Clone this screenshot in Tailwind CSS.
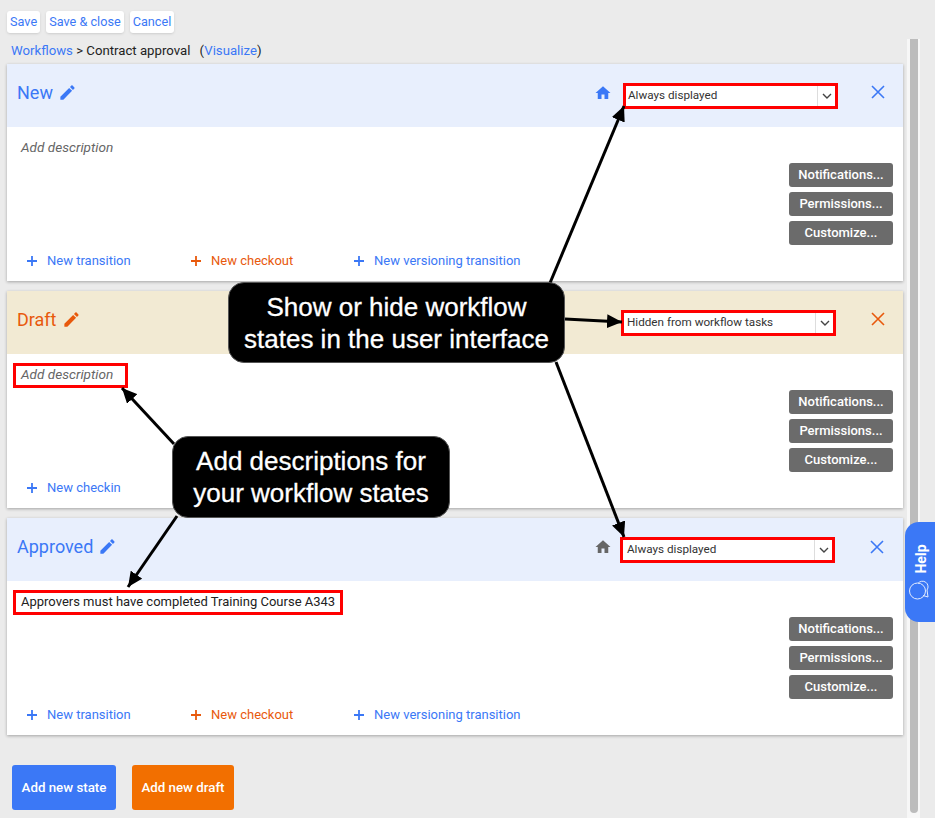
<!DOCTYPE html>
<html lang="en">
<head>
  <meta charset="UTF-8" />
  <meta name="viewport" content="width=device-width, initial-scale=1.0" />
  <title>Contract approval</title>
  <script src="https://cdn.jsdelivr.net/npm/@tailwindcss/browser@4"></script>
</head>
<body class="bg-[#ebebeb] h-[818px] overflow-hidden relative font-['Roboto',sans-serif] text-[13px] text-[#222]">
  <!-- Toolbar -->
  <div class="flex gap-[6px] pt-[11px] pl-[7px]">
    <button class="h-[22px] px-[3px] bg-white rounded-[3px] shadow-sm text-[12.7px] text-[#3b78f6]">Save</button>
    <button class="h-[22px] px-[3px] bg-white rounded-[3px] shadow-sm text-[12.7px] text-[#3b78f6]">Save &amp; close</button>
    <button class="h-[22px] px-[3px] bg-white rounded-[3px] shadow-sm text-[12.7px] text-[#3b78f6]">Cancel</button>
  </div>
  <div class="h-[31px] pl-[11px] pt-[10px] leading-[16px] text-[13.2px]">
    <a class="text-[#3b78f6]">Workflows</a> &gt; Contract approval <span class="ml-[6px]">(<a class="text-[#3b78f6]">Visualize</a>)</span>
  </div>

  <main id="states" class="ml-[7px] w-[896px] flex flex-col gap-[10px]"></main>

  <div class="flex gap-[16px] ml-[12px] mt-[30px]">
    <button class="w-[104px] h-[45px] bg-[#3b78f6] text-white text-[13.3px] font-medium rounded-[3px]">Add new state</button>
    <button class="w-[102px] h-[45px] bg-[#f26f00] text-white text-[13.3px] font-medium rounded-[3px]">Add new draft</button>
  </div>

  <!-- Scrollbar -->
  <div class="absolute left-[907px] top-[39px] bottom-0 w-[13px] bg-[#f7f7f7]">
    <div class="ml-[3px] w-[8px] h-[774px] bg-[#bcbcbc] rounded-b-[4px]"></div>
  </div>

  <!-- Help tab -->
  <div class="absolute left-[905px] top-[522px] w-[30px] h-[100px] bg-[#3b78f6] rounded-l-[14px]">
    <span class="absolute left-[1px] top-[28px] w-[30px] text-center -rotate-90 text-white font-bold text-[14px] leading-[18px]">Help</span>
    <svg class="absolute left-[3px] top-[56px]" width="24" height="24" viewBox="0 0 24 24" fill="none" stroke="#e3ecfe" stroke-width="1">
      <circle cx="9.5" cy="13" r="8" />
      <path d="M10 5.5a5.5 5.5 0 1 1 9 6.5l1 7-5-1.5" />
    </svg>
  </div>

  <!-- Annotations -->
  <svg class="absolute left-0 top-0 pointer-events-none" width="935" height="818">
    <defs>
      <marker id="head" markerUnits="userSpaceOnUse" markerWidth="16" markerHeight="14" refX="15" refY="7" orient="auto">
        <path d="M0 0L15 7L0 14z" fill="#000" />
      </marker>
    </defs>
    <g stroke="#000" stroke-width="3">
      <line x1="550" y1="283" x2="624" y2="106" marker-end="url(#head)" />
      <line x1="565" y1="319" x2="622" y2="322" marker-end="url(#head)" />
      <line x1="556" y1="362" x2="624" y2="537" marker-end="url(#head)" />
      <line x1="174" y1="444" x2="122" y2="388" marker-end="url(#head)" />
      <line x1="177" y1="516" x2="128" y2="587" marker-end="url(#head)" />
    </g>
  </svg>
  <div class="absolute left-[228px] top-[282px] w-[337px] h-[81px] flex items-center justify-center text-center bg-black border border-[#555] rounded-[16px] text-white font-['Liberation_Sans',sans-serif] text-[26px] leading-[32px] [-webkit-text-stroke:0.3px_#fff]">Show or hide workflow<br />states in the user interface</div>
  <div class="absolute left-[172px] top-[436px] w-[278px] h-[82px] flex items-center justify-center text-center bg-black border border-[#555] rounded-[16px] text-white font-['Liberation_Sans',sans-serif] text-[26px] leading-[32px] [-webkit-text-stroke:0.3px_#fff]">Add descriptions for<br />your workflow states</div>

  <script>
    const pencil = "M3 17.25V21h3.75L17.81 9.94l-3.75-3.75L3 17.25zM20.71 7.04c.39-.39.39-1.02 0-1.41l-2.34-2.34c-.39-.39-1.02-.39-1.41 0l-1.83 1.83 3.75 3.75 1.83-1.83z";
    const home = "M10 20v-6h4v6h5v-8h3L12 3 2 12h3v8z";

    const plus = `<svg class="w-[12px] h-[12px]" viewBox="0 0 12 12" fill="none" stroke="currentColor" stroke-width="1.8"><path d="M6 1v10M1 6h10" /></svg>`;
    const links = {
      full: `
        <a class="absolute left-[19px] flex items-center gap-[9px] text-[#3b78f6]">${plus}New transition</a>
        <a class="absolute left-[183px] flex items-center gap-[9px] text-[#e8590c]">${plus}New checkout</a>
        <a class="absolute left-[346px] flex items-center gap-[9px] text-[#3b78f6]">${plus}New versioning transition</a>`,
      draft: `<a class="absolute left-[19px] flex items-center gap-[9px] text-[#3b78f6]">${plus}New checkin</a>`
    };

    const states = [
      { name: "New", head: "bg-[#e8effd]", text: "text-[#3b78f6]", homeCls: "mr-[11px] text-[#3b78f6]", select: "Always displayed", selectCls: "mr-[65px]", selectPad: "pl-[2px]", xCls: "right-[18px] top-[21px]",
        desc: "Add description", descCls: "w-[115px] border-transparent italic text-[13.6px] text-[#666]", links: links.full },
      { name: "Draft", head: "bg-[#f2ead3]", text: "text-[#e8590c]", homeCls: "mr-[10px] invisible", select: "Hidden from workflow tasks", selectCls: "mr-[67px]", selectPad: "pl-[3px]", xCls: "right-[18px] top-[21px]",
        desc: "Add description", descCls: "w-[115px] border-[#f00] italic text-[13.6px] text-[#666]", links: links.draft },
      { name: "Approved", head: "bg-[#e8effd]", text: "text-[#3b78f6]", homeCls: "mr-[8px] text-[#666]", select: "Always displayed", selectCls: "mr-[68px]", selectPad: "pl-[4px]", xCls: "right-[19px] top-[22px]",
        desc: "Approvers must have completed Training Course A343", descCls: "w-[330px] border-[#f00] text-[#222]", links: links.full }
    ];

    document.getElementById("states").innerHTML = states.map(s => `
      <section class="h-[217px] bg-white shadow-[0_1px_3px_rgba(0,0,0,0.3)]">
        <header class="relative h-[63px] flex items-center pl-[10px] ${s.head}">
          <h2 class="-mt-[7px] text-[18px] ${s.text}">${s.name}</h2>
          <svg class="-mt-[7px] ml-[5px] ${s.text}" width="19" height="19" viewBox="0 0 24 24" fill="currentColor"><path d="${pencil}" /></svg>
          <svg class="-mt-[6px] ml-auto ${s.homeCls}" width="18" height="18" viewBox="0 0 24 24" fill="currentColor"><path d="${home}" /></svg>
          <div class="w-[215px] h-[26px] flex items-center bg-white border-[3px] border-[#f00] text-[11.7px] text-[#333] ${s.selectCls}">
            <span class="flex-1 ${s.selectPad}">${s.select}</span>
            <span class="w-[18px] h-full flex items-center justify-center border-l border-[#ddd]">
              <svg width="10" height="6" viewBox="0 0 10 6" fill="none" stroke="#444" stroke-width="1.4"><path d="M1 1l4 4 4-4" /></svg>
            </span>
          </div>
          <svg class="absolute ${s.xCls} ${s.text}" width="14" height="14" viewBox="0 0 14 14" fill="none" stroke="currentColor" stroke-width="1.6"><path d="M1 1l12 12M13 1L1 13" /></svg>
        </header>
        <div class="relative h-[154px]">
          <div class="absolute left-[6px] top-[9px] h-[25px] flex items-center pl-[5px] pb-[2px] border-[3px] ${s.descCls}">${s.desc}</div>
          <div class="absolute right-[10px] top-[36px] w-[104px] flex flex-col gap-[5px]">
            <button class="h-[24px] bg-[#6b6b6b] text-white font-medium rounded-[3px]">Notifications...</button>
            <button class="h-[24px] bg-[#6b6b6b] text-white font-medium rounded-[3px]">Permissions...</button>
            <button class="h-[24px] bg-[#6b6b6b] text-white font-medium rounded-[3px]">Customize...</button>
          </div>
          <div class="absolute left-0 right-0 top-[126px] leading-[16px]">${s.links}</div>
        </div>
      </section>
    `).join("");
  </script>
</body>
</html>
